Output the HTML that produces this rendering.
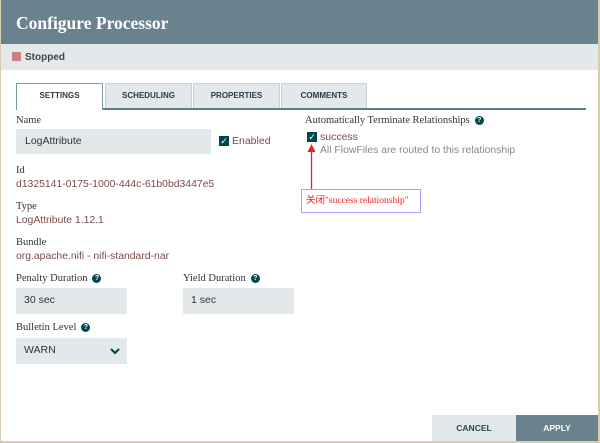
<!DOCTYPE html>
<html><head><meta charset="utf-8"><style>
*{margin:0;padding:0;box-sizing:border-box}
body{width:600px;height:443px;background:#d8ccb0;position:relative;overflow:hidden;font-family:"Liberation Sans",sans-serif}
#dlg{position:absolute;left:1px;top:0;width:597px;height:441px;background:#fff}
.hdr{position:absolute;left:0;top:0;width:597px;height:44px;background:#6a828e;color:#fff;font-family:"Liberation Serif",serif;font-weight:bold;font-size:17.5px;padding:13px 0 0 15px}
.st{position:absolute;left:0;top:44px;width:597px;height:26px;background:#e3e8eb;font-size:10px;font-weight:bold;color:#444;padding:8px 0 0 24px}
.st i{position:absolute;left:11px;top:8px;width:9px;height:9px;background:#d08080}
.tab{position:absolute;top:83px;height:26px;background:#e3e8eb;border:1px solid #c8d2d6;font-size:8px;font-weight:bold;text-align:center;line-height:24px;color:#2a3a40}
.tab.a{background:#fff;border:1px solid #7a9aa4;border-bottom:none;height:27px;z-index:2}
.line{position:absolute;left:16px;top:108px;width:569px;height:2px;background:#5d7f88}
.lbl{position:absolute;font-family:"Liberation Serif",serif;font-size:10.5px;color:#333}
.val{position:absolute;font-size:10.4px;color:#7a4a4a}
.in{position:absolute;background:#e3e8eb;font-size:10.5px;color:#333;padding-left:8px;line-height:25px}
.q{display:inline-block;width:9px;height:9px;border-radius:50%;background:#004850;color:#fff;font-size:7px;font-weight:bold;text-align:center;line-height:9px;vertical-align:1px;margin-left:5px;font-family:"Liberation Sans",sans-serif}
.cb{position:absolute;width:10px;height:10px;background:#004850;color:#fff;font-size:9px;line-height:10px;text-align:center}
.btn{position:absolute;top:415px;height:26px;font-size:8.5px;font-weight:bold;text-align:center;line-height:26px}
</style></head><body><div id="dlg">
<div class="hdr">Configure Processor</div>
<div class="st"><i></i>Stopped</div>
<div class="tab a" style="left:15px;width:87px">SETTINGS</div>
<div class="tab" style="left:104px;width:87px">SCHEDULING</div>
<div class="tab" style="left:192px;width:87px">PROPERTIES</div>
<div class="tab" style="left:280px;width:86px">COMMENTS</div>
<div class="line"></div>
<div class="lbl" style="left:15px;top:115px">Name</div>
<div class="in" style="left:15px;top:129px;width:195px;height:25px;padding-left:9px">LogAttribute</div>
<div class="cb" style="left:218px;top:136px">✓</div>
<div class="val" style="left:231px;top:135px;font-size:10.5px">Enabled</div>
<div class="lbl" style="left:15px;top:165px">Id</div>
<div class="val" style="left:15px;top:179px">d1325141-0175-1000-444c-61b0bd3447e5</div>
<div class="lbl" style="left:15px;top:201px">Type</div>
<div class="val" style="left:15px;top:215px">LogAttribute 1.12.1</div>
<div class="lbl" style="left:15px;top:237px">Bundle</div>
<div class="val" style="left:15px;top:251px">org.apache.nifi - nifi-standard-nar</div>
<div class="lbl" style="left:15px;top:273px">Penalty Duration<span class="q">?</span></div>
<div class="in" style="left:15px;top:288px;width:111px;height:26px">30 sec</div>
<div class="lbl" style="left:182px;top:273px">Yield Duration<span class="q">?</span></div>
<div class="in" style="left:182px;top:288px;width:111px;height:26px">1 sec</div>
<div class="lbl" style="left:15px;top:322px">Bulletin Level<span class="q">?</span></div>
<div class="in" style="left:15px;top:338px;width:111px;height:26px">WARN<svg style="position:absolute;right:7px;top:9px" width="10" height="8" viewBox="0 0 10 8"><path d="M1 2 L5 6 L9 2" stroke="#004850" stroke-width="2.2" fill="none"/></svg></div>
<div class="lbl" style="left:304px;top:115px">Automatically Terminate Relationships<span class="q">?</span></div>
<div class="cb" style="left:306px;top:132px">✓</div>
<div class="val" style="left:319px;top:131px;font-size:10.5px">success</div>
<div style="position:absolute;left:319px;top:145px;font-size:10.4px;color:#888">All FlowFiles are routed to this relationship</div>
<svg style="position:absolute;left:305px;top:143px" width="12" height="48"><path d="M5.5 4 V48" stroke="#f02020" stroke-width="1.3"/><path d="M1.5 9 L5.5 1 L9.5 9 Z" fill="#f02020"/></svg>
<div style="position:absolute;left:300px;top:189px;width:120px;height:24px;border:1px solid #a0a0ff;background:#fff;color:#f02020;font-size:9.5px;line-height:22px;padding-left:4px;font-family:'Liberation Serif','Noto Sans CJK SC',serif">关闭"success relationship"</div>
<div class="btn" style="left:431px;width:84px;background:#e3e8eb;color:#264a50">CANCEL</div>
<div class="btn" style="left:515px;width:82px;background:#6a828e;color:#fff">APPLY</div>
</div></body></html>
